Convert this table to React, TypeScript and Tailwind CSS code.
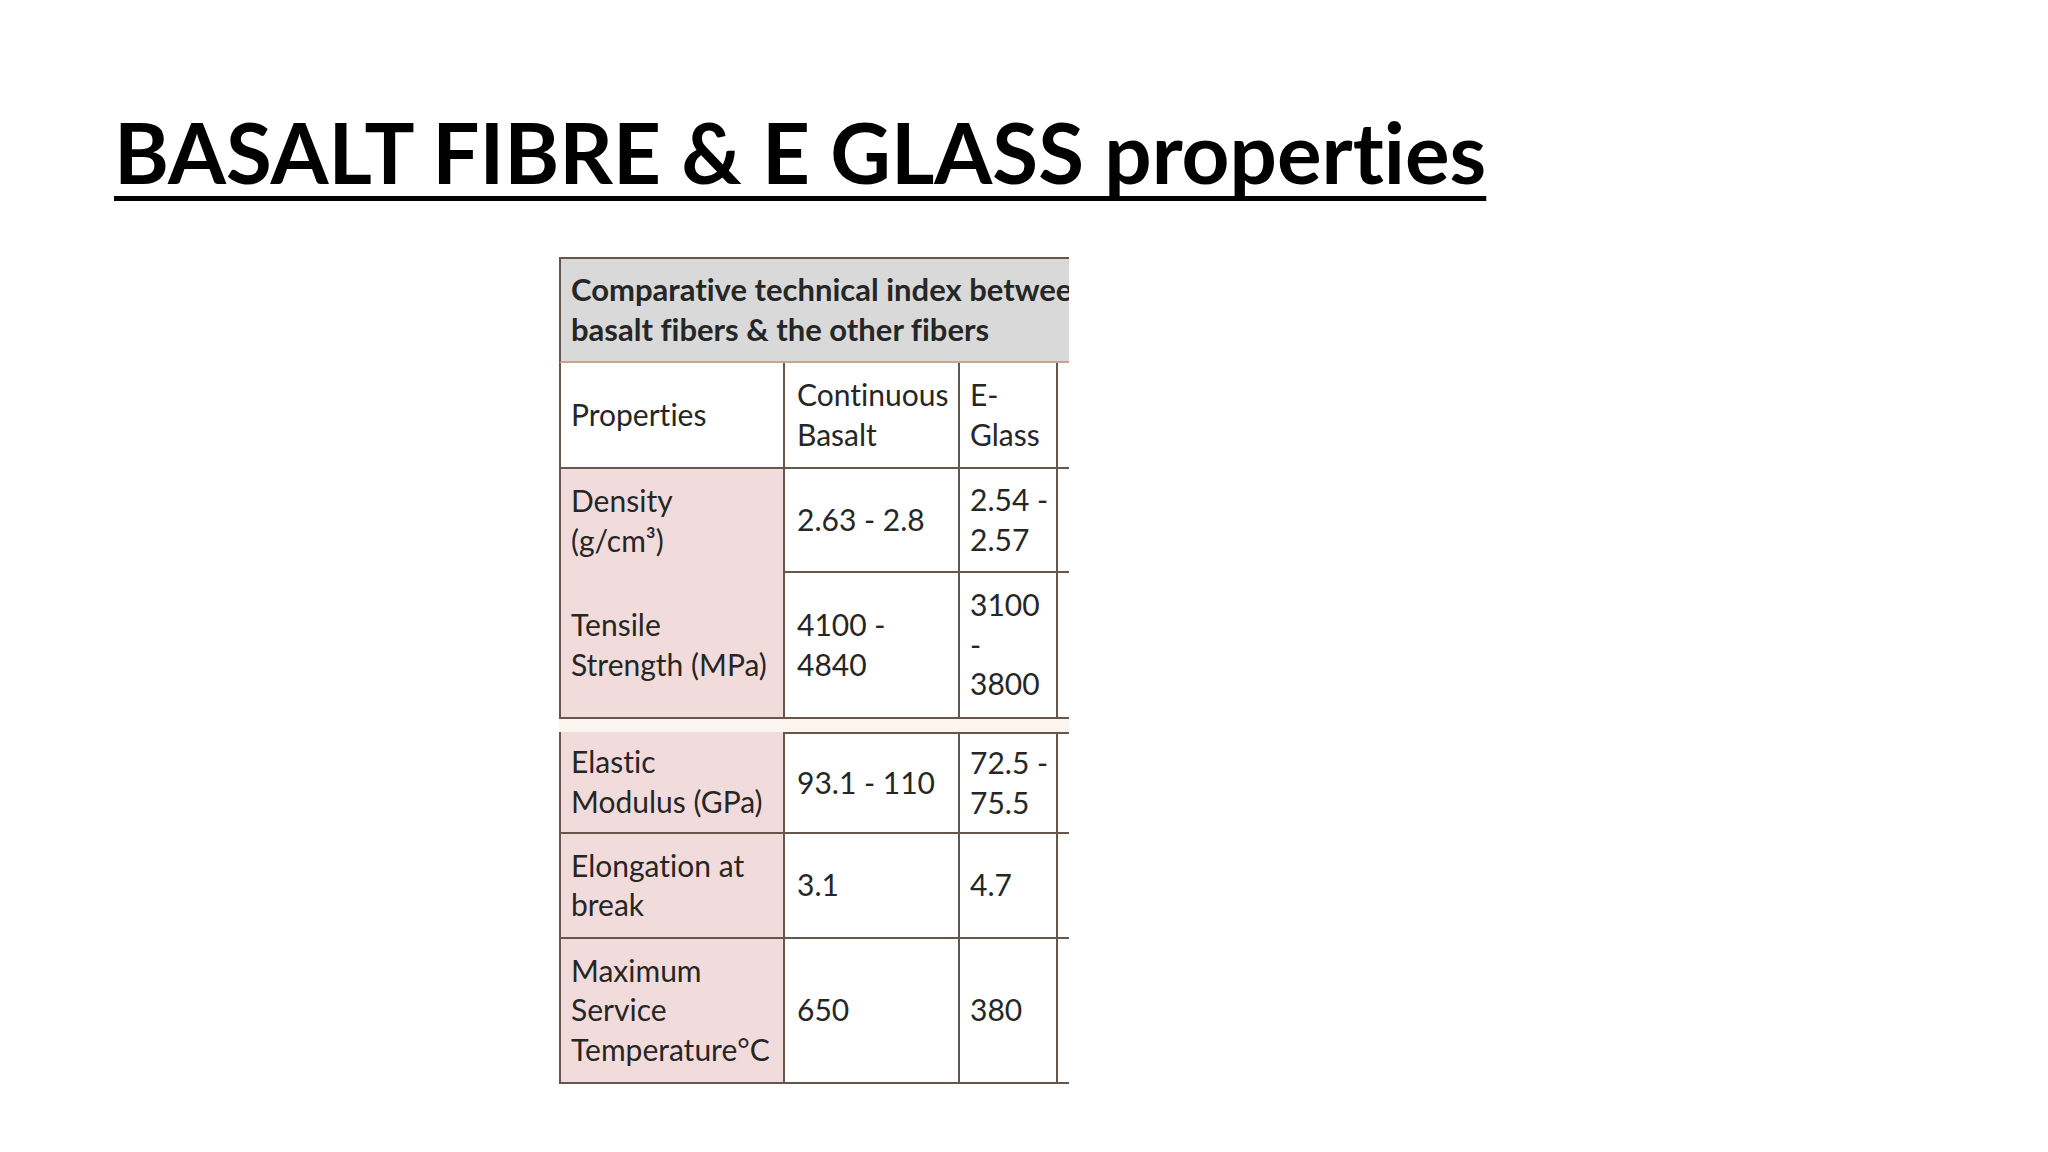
import React from "react";

const B = "border-[#66574a]";

function Cell({
  children,
  className = "",
}: {
  children?: React.ReactNode;
  className?: string;
}) {
  return <div className={`flex items-center ${className}`}>{children}</div>;
}

function Lines({ lines }: { lines: string[] }) {
  return (
    <div className="whitespace-nowrap">
      {lines.map((l, i) => (
        <div key={i}>{l}</div>
      ))}
    </div>
  );
}

type Row = {
  h: string;
  label: string[];
  a: string[];
  b: string[];
  noBottomLabel?: boolean;
  topLine?: boolean;
};

function DataRow({ row, pinkLabel = true }: { row: Row; pinkLabel?: boolean }) {
  return (
    <div className={`grid grid-cols-[226px_175px_98px_1fr] ${row.h}`}>
      <Cell
        className={`pl-[10px] border-l-2 border-r-2 ${B} ${
          row.noBottomLabel ? "" : "border-b-2"
        } ${pinkLabel ? "bg-[#f2dcdb]" : "bg-white"}`}
      >
        <Lines lines={row.label} />
      </Cell>
      <Cell className={`pl-[12px] border-r-2 border-b-2 ${B} ${row.topLine ? "border-t-2" : ""}`}>
        <Lines lines={row.a} />
      </Cell>
      <Cell className={`pl-[10px] border-r-2 border-b-2 ${B} ${row.topLine ? "border-t-2" : ""}`}>
        <Lines lines={row.b} />
      </Cell>
      <div className={`border-b-2 ${B} ${row.topLine ? "border-t-2" : ""}`} />
    </div>
  );
}

export default function App() {
  const group1: Row[] = [
    { h: "h-[104px]", label: ["Density", "(g/cm³)"], a: ["2.63 - 2.8"], b: ["2.54 -", "2.57"], noBottomLabel: true },
    { h: "h-[146px]", label: ["Tensile", "Strength (MPa)"], a: ["4100 -", "4840"], b: ["3100", "-", "3800"] },
  ];
  const group2: Row[] = [
    { h: "h-[102px]", label: ["Elastic", "Modulus (GPa)"], a: ["93.1 - 110"], b: ["72.5 -", "75.5"], topLine: true },
    { h: "h-[105px]", label: ["Elongation at", "break"], a: ["3.1"], b: ["4.7"] },
    { h: "h-[145px]", label: ["Maximum", "Service", "Temperature°C"], a: ["650"], b: ["380"] },
  ];

  return (
    <div className="w-[2048px] h-[1152px] bg-white overflow-hidden font-['Lato',sans-serif] [font-variant-ligatures:none]">
      <div className="pt-[111px] pl-[114px]">
        <h1 className="text-[83.5px] leading-none font-bold text-black whitespace-nowrap underline decoration-[5px] underline-offset-[12px] [text-decoration-skip-ink:none]">
          BASALT FIBRE &amp; E GLASS properties
        </h1>
      </div>

      <div className="mt-[62px] ml-[559px] w-[510px] overflow-hidden text-[30px] leading-[39.5px] text-[#262626]">
        <div
          className={`h-[106px] flex items-center pl-[10px] bg-[#d9d9d9] border-t-2 border-l-2 ${B} border-b-2 border-b-[#c9a58f] font-bold whitespace-nowrap text-[31px]`}
        >
          <div>
            <div>Comparative technical index between</div>
            <div>basalt fibers &amp; the other fibers</div>
          </div>
        </div>

        <DataRow
          pinkLabel={false}
          row={{ h: "h-[106px]", label: ["Properties"], a: ["Continuous", "Basalt"], b: ["E-", "Glass"] }}
        />
        {group1.map((r, i) => (
          <DataRow key={i} row={r} />
        ))}

        <div className="h-[13px] bg-[#fcf5ef]" />

        {group2.map((r, i) => (
          <DataRow key={i} row={r} />
        ))}
      </div>
    </div>
  );
}
